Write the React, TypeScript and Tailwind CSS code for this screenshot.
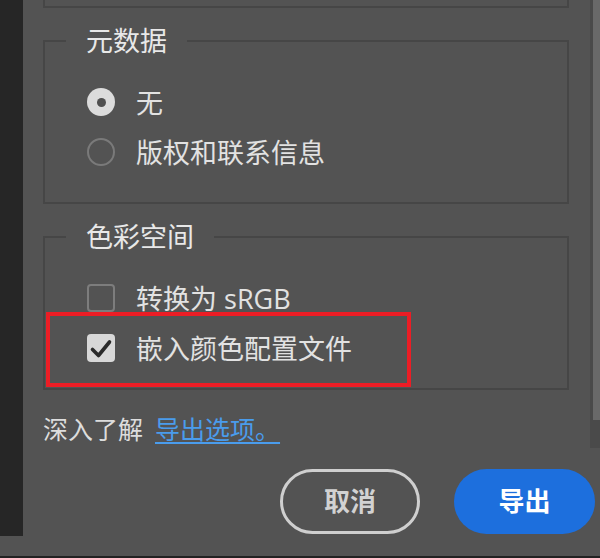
import React from 'react';

const font = { fontFamily: '"Open Sans", "Noto Sans CJK SC", sans-serif' };

const Radio = ({ checked }: { checked?: boolean }) =>
  checked ? (
    <span className="flex h-[28px] w-[28px] shrink-0 items-center justify-center rounded-full bg-[#dcdcdc]">
      <span className="h-[9px] w-[9px] rounded-full bg-[#505050]" />
    </span>
  ) : (
    <span className="h-[28px] w-[28px] shrink-0 rounded-full border-2 border-[#7a7a7a]" />
  );

const Checkbox = ({ checked }: { checked?: boolean }) =>
  checked ? (
    <span className="flex h-[28px] w-[28px] shrink-0 items-center justify-center rounded-[4px] bg-[#d8d8d8]">
      <svg width="28" height="28" viewBox="0 0 28 28" fill="none">
        <path d="M5.5 15.5 L11.5 21.5 L22.5 8" stroke="#2b2b2b" strokeWidth="3.6" strokeLinecap="round" strokeLinejoin="round" />
      </svg>
    </span>
  ) : (
    <span className="h-[28px] w-[28px] shrink-0 rounded-[4px] border-2 border-[#7d7d7d]" />
  );

const Row: React.FC<{ control: React.ReactNode; label: string }> = ({ control, label }) => (
  <div className="flex h-[50px] items-center gap-[21px]">
    {control}
    <span className="text-[27px] leading-none text-[#e2e2e2]">{label}</span>
  </div>
);

export default function App() {
  return (
    <div className="flex h-[558px] w-[600px] flex-col overflow-hidden bg-[#535353]" style={font}>
      <div className="flex h-[536px]">
        {/* left dark strip */}
        <div className="w-[23px] shrink-0 bg-[#262626]" />

        <div className="flex flex-1 flex-col">
          {/* scrolling area */}
          <div className="flex h-[448px]">
            <div className="flex-1 pl-[20px] pr-[21px]">
              {/* end of previous section */}
              <div className="h-[8px] border-x-2 border-b-2 border-[#464646]" />

              <fieldset className="mt-[17px] border-2 border-[#464646] px-[21px] pb-[25px] pt-[20px]">
                <legend className="px-[20px] text-[27px] leading-[32px] text-[#e8e8e8]">元数据</legend>
                <div className="pl-[21px]">
                  <Row control={<Radio checked />} label="无" />
                  <Row control={<Radio />} label="版权和联系信息" />
                </div>
              </fieldset>

              <fieldset className="mt-[17px] border-2 border-[#464646] px-[21px] pb-[15px] pt-[20px]">
                <legend className="px-[20px] text-[27px] leading-[32px] text-[#e8e8e8]">色彩空间</legend>
                <div className="pl-[21px]">
                  <Row control={<Checkbox />} label="转换为 sRGB" />
                  <div className="relative">
                    <Row control={<Checkbox checked />} label="嵌入颜色配置文件" />
                    {/* highlight annotation */}
                    <div className="pointer-events-none absolute left-[-41px] top-[-11px] h-[75px] w-[365px] border-4 border-[#ec1d25]" />
                  </div>
                </div>
              </fieldset>

              <p className="mt-[23px] flex h-[32px] items-center gap-[12px] text-[25px] leading-none">
                <span className="text-[#dddddd]">深入了解</span>
                <a className="text-[#4a9cec] underline underline-offset-[3px]" href="#">
                  导出选项。
                </a>
              </p>
            </div>

            {/* scrollbar */}
            <div className="flex w-[10px] justify-end bg-[#4a4a4a]">
              <div className="h-[420px] w-[7px] bg-[#696969]" />
            </div>
          </div>

          {/* footer buttons */}
          <div className="flex flex-1 items-start justify-end gap-[34px] pr-[5px] pt-[21px]">
            <button className="flex h-[65px] w-[140px] items-center justify-center rounded-full border-[3px] border-[#cfcfcf] text-[26px] font-bold text-[#d2d2d2]">
              取消
            </button>
            <button className="flex h-[65px] w-[141px] items-center justify-center rounded-full bg-[#1d6fdd] text-[26px] font-bold text-white">
              导出
            </button>
          </div>
        </div>
      </div>
      <div className="flex-1" />
      <div className="h-[2px] bg-[#222222]" />
    </div>
  );
}
